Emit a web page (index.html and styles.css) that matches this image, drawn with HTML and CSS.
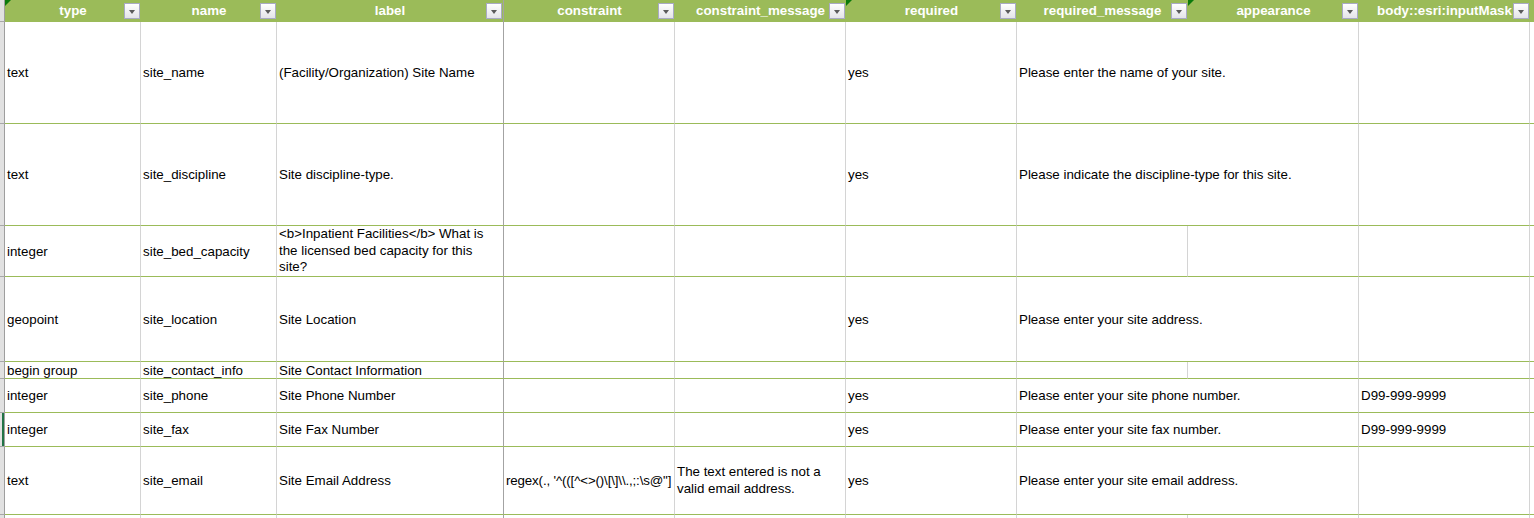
FILE: index.html
```html
<!DOCTYPE html>
<html>
<head>
<meta charset="utf-8">
<title>survey</title>
<link rel="stylesheet" href="styles.css">
</head>
<body>
<div class="sheet">
  <!-- header row -->
  <div class="rh"></div>
  <div class="hc"><span class="tri"></span>type<span class="fb"></span></div>
  <div class="hc">name<span class="fb"></span></div>
  <div class="hc colc">label<span class="fb"></span></div>
  <div class="hc">constraint<span class="fb"></span></div>
  <div class="hc">constraint_message<span class="fb"></span></div>
  <div class="hc"><span class="tri"></span>required<span class="fb"></span></div>
  <div class="hc">required_message<span class="fb"></span></div>
  <div class="hc"><span class="tri"></span>appearance<span class="fb"></span></div>
  <div class="hc">body::esri:inputMask<span class="fb"></span></div>
  <div class="hc last"></div>

  <!-- row 1 -->
  <div class="rh"></div>
  <div class="c">text</div>
  <div class="c">site_name</div>
  <div class="c colc">(Facility/Organization) Site Name</div>
  <div class="c"></div>
  <div class="c"></div>
  <div class="c">yes</div>
  <div class="c span2">Please enter the name of your site.</div>
  <div class="c"></div>
  <div class="c last"></div>

  <!-- row 2 -->
  <div class="rh"></div>
  <div class="c">text</div>
  <div class="c">site_discipline</div>
  <div class="c colc">Site discipline-type.</div>
  <div class="c"></div>
  <div class="c"></div>
  <div class="c">yes</div>
  <div class="c span2">Please indicate the discipline-type for this site.</div>
  <div class="c"></div>
  <div class="c last"></div>

  <!-- row 3 -->
  <div class="rh"></div>
  <div class="c">integer</div>
  <div class="c">site_bed_capacity</div>
  <div class="c colc wrap">&lt;b&gt;Inpatient Facilities&lt;/b&gt; What is the licensed bed capacity for this site?</div>
  <div class="c"></div>
  <div class="c"></div>
  <div class="c"></div>
  <div class="c"></div>
  <div class="c"></div>
  <div class="c"></div>
  <div class="c last"></div>

  <!-- row 4 -->
  <div class="rh"></div>
  <div class="c">geopoint</div>
  <div class="c">site_location</div>
  <div class="c colc">Site Location</div>
  <div class="c"></div>
  <div class="c"></div>
  <div class="c">yes</div>
  <div class="c span2">Please enter your site address.</div>
  <div class="c"></div>
  <div class="c last"></div>

  <!-- row 5 -->
  <div class="rh"></div>
  <div class="c">begin group</div>
  <div class="c">site_contact_info</div>
  <div class="c colc">Site Contact Information</div>
  <div class="c"></div>
  <div class="c"></div>
  <div class="c"></div>
  <div class="c"></div>
  <div class="c"></div>
  <div class="c"></div>
  <div class="c last"></div>

  <!-- row 6 -->
  <div class="rh"></div>
  <div class="c">integer</div>
  <div class="c">site_phone</div>
  <div class="c colc">Site Phone Number</div>
  <div class="c"></div>
  <div class="c"></div>
  <div class="c">yes</div>
  <div class="c span2">Please enter your site phone number.</div>
  <div class="c">D99-999-9999</div>
  <div class="c last"></div>

  <!-- row 7 -->
  <div class="rh sel"></div>
  <div class="c">integer</div>
  <div class="c">site_fax</div>
  <div class="c colc">Site Fax Number</div>
  <div class="c"></div>
  <div class="c"></div>
  <div class="c">yes</div>
  <div class="c span2">Please enter your site fax number.</div>
  <div class="c">D99-999-9999</div>
  <div class="c last"></div>

  <!-- row 8 -->
  <div class="rh"></div>
  <div class="c">text</div>
  <div class="c">site_email</div>
  <div class="c colc">Site Email Address</div>
  <div class="c tight">regex(., '^(([^&lt;&gt;()\[\]\\.,;:\s@"]</div>
  <div class="c wrap">The text entered is not a valid email address.</div>
  <div class="c">yes</div>
  <div class="c span2">Please enter your site email address.</div>
  <div class="c"></div>
  <div class="c last"></div>

  <!-- row 9 -->
  <div class="rh end"></div>
  <div class="c end"></div>
  <div class="c end"></div>
  <div class="c colc end"></div>
  <div class="c end"></div>
  <div class="c end"></div>
  <div class="c end"></div>
  <div class="c end"></div>
  <div class="c end"></div>
  <div class="c end"></div>
  <div class="c last end"></div>
</div>
</body>
</html>
```

FILE: styles.css
```css
html, body {
  margin: 0;
  padding: 0;
  background: #ffffff;
}

.sheet {
  width: 1534px;
  height: 518px;
  overflow: hidden;
  display: grid;
  grid-template-columns: 5px 136px 136px 227px 171px 171px 171px 171px 171px 171px 1fr;
  grid-template-rows: 22px 102px 102px 51px 85px 17px 34px 34px 68px 1fr;
  font-family: "Liberation Sans", Arial, sans-serif;
  font-size: 13.33px;
  color: #000000;
}

.sheet > div {
  box-sizing: border-box;
  min-width: 0;
}

.rh {
  background: #e1e1e1;
  border-right: 1px solid #9e9e9e;
  border-bottom: 1px solid #a8a8a8;
}

.rh.sel {
  box-shadow: inset -2px 0 0 #217346;
}

.hc {
  position: relative;
  background: #9bbb59;
  color: #ffffff;
  font-weight: bold;
  display: flex;
  align-items: center;
  justify-content: center;
  padding-bottom: 1px;
  white-space: nowrap;
}

.c {
  display: flex;
  align-items: center;
  padding: 0 2px;
  border-right: 1px solid #d4d4d4;
  border-bottom: 1px solid #9bbb59;
  white-space: nowrap;
  overflow: hidden;
}

.c.last {
  border-right: none;
}

.colc {
  border-right: 1px solid #a3a3a3;
}

.c.span2 {
  grid-column: span 2;
}

.c.wrap {
  white-space: normal;
  line-height: 16.6px;
}

.c.tight {
  letter-spacing: -0.15px;
}

.sheet > .end {
  border-bottom: none;
}

.fb {
  position: absolute;
  right: 1px;
  top: 3px;
  width: 16px;
  height: 16px;
  box-sizing: border-box;
  border: 1px solid #a9aac4;
  background: linear-gradient(#ffffff, #e4e4e8);
}

.fb::after {
  content: "";
  position: absolute;
  left: 4px;
  top: 6px;
  border-left: 3.5px solid transparent;
  border-right: 3.5px solid transparent;
  border-top: 4px solid #5a5a5a;
}

.tri {
  position: absolute;
  left: 0;
  top: 0;
  width: 0;
  height: 0;
  border-top: 6px solid #0b7a0b;
  border-right: 6px solid transparent;
}
```
